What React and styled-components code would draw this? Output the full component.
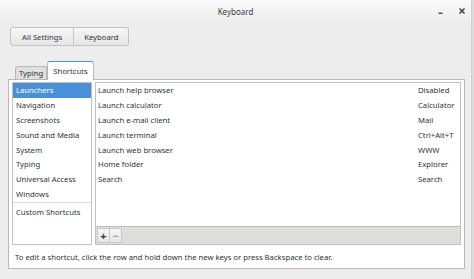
import React from 'react';
import styled, { createGlobalStyle } from 'styled-components';

const Global = createGlobalStyle`
  html, body { margin: 0; padding: 0; background: #dcdcdc; }
  body { font-family: "Noto Sans", "DejaVu Sans", sans-serif; font-size: 7.7px; color: #2e3436; }
`;

const Window = styled.div`
  width: 472px;
  height: 279px;
  background: #ededed;
  display: flex;
  flex-direction: column;
  border-right: 1px solid #d0d0d0;
  box-sizing: border-box;
`;

const TitleBar = styled.div`
  height: 22px;
  display: flex;
  align-items: center;
  justify-content: center;
  position: relative;
  background: linear-gradient(#fbfbfb, #ededed);
  font-size: 8px;
  color: #3b3b3b;
`;

const WinControls = styled.div`
  position: absolute;
  right: 5px;
  top: 0;
  height: 22px;
  display: flex;
  align-items: center;
  gap: 13px;
  color: #555;
`;

const Toolbar = styled.div`
  padding: 5px 10px 0;
  display: flex;
`;

const Crumb = styled.div`
  height: 17px;
  padding: 0 ${p => p.$pad}px;
  display: flex;
  align-items: center;
  border: 1px solid #c3c3c3;
  border-left: ${p => (p.$first ? '1px solid #c3c3c3' : 'none')};
  border-radius: ${p => (p.$first ? '3px 0 0 3px' : '0 3px 3px 0')};
  background: linear-gradient(#f7f7f7, #e6e6e6);
  color: #2e3436;
`;

const Body = styled.div`
  padding: 15px 8px 0 8px;
  display: flex;
  flex-direction: column;
`;

const Tabs = styled.div`
  display: flex;
  align-items: flex-end;
  padding-left: 7px;
  height: 18px;
`;

const Tab = styled.div`
  height: ${p => (p.$active ? 19 : 13)}px;
  padding: 0 ${p => (p.$active ? 5 : 3)}px;
  display: flex;
  align-items: center;
  box-sizing: border-box;
  border: 1px solid #b8b8b8;
  border-bottom: none;
  border-top: ${p => (p.$active ? '1px solid #4a90d9' : '1px solid #b8b8b8')};
  border-radius: 3px 3px 0 0;
  background: ${p => (p.$active ? '#fff' : '#e0e0e0')};
  margin-bottom: ${p => (p.$active ? '-1px' : '0')};
  position: relative;
  color: #2e3436;
`;

const Frame = styled.div`
  width: 457px;
  height: 190px;
  box-sizing: border-box;
  background: #fff;
  border: 1px solid #b8b8b8;
  padding: 2px 3px 0 3px;
  display: flex;
  flex-direction: column;
`;

const Panes = styled.div`
  display: flex;
  gap: 3px;
  height: 163px;
`;

const SideList = styled.div`
  width: 80px;
  box-sizing: border-box;
  border: 1px solid #c0c0c0;
  display: flex;
  flex-direction: column;
`;

const SideItem = styled.div`
  height: 14.8px;
  display: flex;
  align-items: center;
  padding-left: 3px;
  white-space: nowrap;
  background: ${p => (p.$selected ? '#4a90d9' : 'transparent')};
  color: ${p => (p.$selected ? '#fff' : '#2e3436')};
`;

const Divider = styled.div`
  height: 1px;
  background: #dcdcdc;
  margin: 1px 0 1px;
`;

const MainPane = styled.div`
  flex: 1;
  box-sizing: border-box;
  border: 1px solid #c0c0c0;
  display: flex;
  flex-direction: column;
`;

const Rows = styled.div`
  flex: 1;
`;

const Row = styled.div`
  height: 14.8px;
  display: grid;
  grid-template-columns: 1fr 42px;
  align-items: center;
  padding-left: 2px;
  white-space: nowrap;
`;

const ListBar = styled.div`
  height: 17px;
  border-top: 1px solid #bdbdbd;
  background: #dcdedb;
  display: flex;
  align-items: center;
  padding-left: 1px;
`;

const BarButton = styled.div`
  width: 11px;
  height: 13px;
  display: flex;
  align-items: center;
  justify-content: center;
  border: 1px solid #c8c8c8;
  border-left: ${p => (p.$first ? '1px solid #c8c8c8' : 'none')};
  background: linear-gradient(#f6f6f6, #e6e6e6);
  color: ${p => (p.$dim ? '#a8a8a8' : '#2e3436')};
  font-size: 11px;
  font-weight: bold;
  line-height: 1;
`;

const Hint = styled.div`
  padding: 7px 0 0 3px;
  color: #2e3436;
`;

const launchers = [
  ['Launch help browser', 'Disabled'],
  ['Launch calculator', 'Calculator'],
  ['Launch e-mail client', 'Mail'],
  ['Launch terminal', 'Ctrl+Alt+T'],
  ['Launch web browser', 'WWW'],
  ['Home folder', 'Explorer'],
  ['Search', 'Search'],
];

const sections = ['Launchers', 'Navigation', 'Screenshots', 'Sound and Media', 'System', 'Typing', 'Universal Access', 'Windows'];

export default function App() {
  return (
    <Window>
      <Global />
      <TitleBar>
        Keyboard
        <WinControls>
          <svg width="8" height="8" viewBox="0 0 8 8"><rect x="1.5" y="5.5" width="4" height="1.5" fill="#555" /></svg>
          <svg width="8" height="8" viewBox="0 0 8 8"><path d="M1.5 1.5 L6.5 6.5 M6.5 1.5 L1.5 6.5" stroke="#444" strokeWidth="1.6" /></svg>
        </WinControls>
      </TitleBar>
      <Toolbar>
        <Crumb $first $pad={11}>All Settings</Crumb>
        <Crumb $pad={10}>Keyboard</Crumb>
      </Toolbar>
      <Body>
        <Tabs>
          <Tab>Typing</Tab>
          <Tab $active>Shortcuts</Tab>
        </Tabs>
        <Frame>
          <Panes>
            <SideList>
              {sections.map((s, i) => (
                <SideItem key={s} $selected={i === 0}>{s}</SideItem>
              ))}
              <Divider />
              <SideItem>Custom Shortcuts</SideItem>
            </SideList>
            <MainPane>
              <Rows>
                {launchers.map(([name, key]) => (
                  <Row key={name}>
                    <span>{name}</span>
                    <span>{key}</span>
                  </Row>
                ))}
              </Rows>
              <ListBar>
                <BarButton $first>+</BarButton>
                <BarButton $dim>−</BarButton>
              </ListBar>
            </MainPane>
          </Panes>
          <Hint>To edit a shortcut, click the row and hold down the new keys or press Backspace to clear.</Hint>
        </Frame>
      </Body>
    </Window>
  );
}
